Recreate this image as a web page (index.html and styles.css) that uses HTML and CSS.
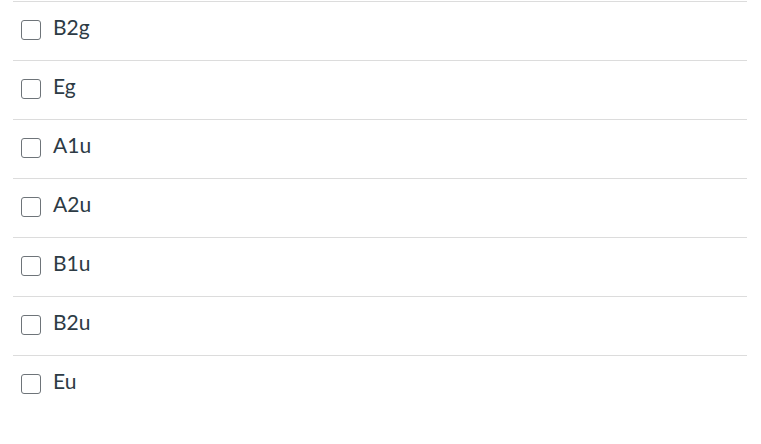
FILE: index.html
```html
<!DOCTYPE html>
<html>
<head>
<meta charset="utf-8">
<link rel="stylesheet" href="styles.css">
</head>
<body>
<div class="list">
  <label class="row"><span class="box"></span><span class="label">B2g</span></label>
  <label class="row"><span class="box"></span><span class="label">Eg</span></label>
  <label class="row"><span class="box"></span><span class="label">A1u</span></label>
  <label class="row"><span class="box"></span><span class="label">A2u</span></label>
  <label class="row"><span class="box"></span><span class="label">B1u</span></label>
  <label class="row"><span class="box"></span><span class="label">B2u</span></label>
  <label class="row"><span class="box"></span><span class="label">Eu</span></label>
</div>
</body>
</html>
```
FILE: styles.css
```css
html, body {
  margin: 0;
  padding: 0;
  background: #fff;
}
body {
  font-family: Lato, "Liberation Sans", sans-serif;
  color: #2d3b45;
}
.list {
  margin: 1px 0 0 13px;
  width: 734px;
}
.row {
  display: flex;
  align-items: flex-start;
  gap: 12px;
  height: 59px;
  box-sizing: border-box;
  border-top: 1px solid #dcdcdc;
  padding-left: 8px;
}
.box {
  width: 20px;
  height: 20px;
  box-sizing: border-box;
  border: 1px solid #6e7479;
  border-radius: 3px;
  margin-top: 18px;
  background: #fff;
}
.label {
  font-size: 21px;
  line-height: 24px;
  margin-top: 13px;
}
```
